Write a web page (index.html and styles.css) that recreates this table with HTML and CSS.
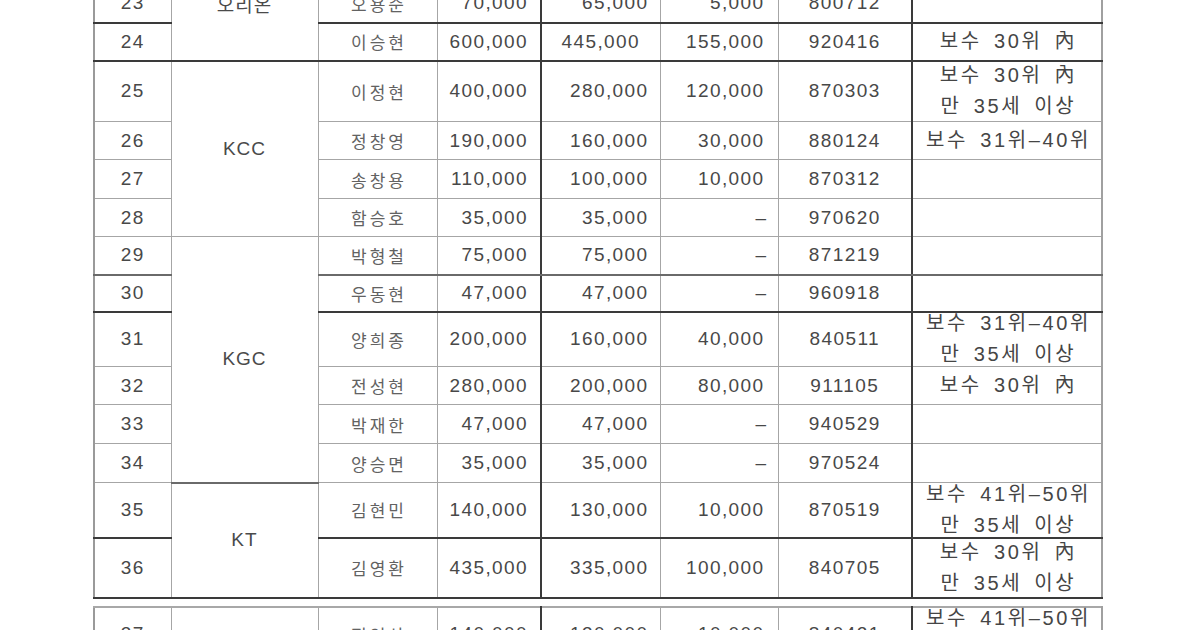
FILE: index.html
```html
<!DOCTYPE html>
<html lang="ko">
<head>
<meta charset="utf-8">
<title>보수 표</title>
<link rel="stylesheet" href="styles.css">
</head>
<body>
<div class="page">
  <table class="sheet first">
    <colgroup>
      <col class="w1"><col class="w2"><col class="w3"><col class="w4"><col class="w5"><col class="w6"><col class="w7"><col class="w8">
    </colgroup>
    <tbody>
      <tr class="h38">
        <td class="no"></td>
        <td class="team dkb" rowspan="3">오리온</td>
        <td class="nm"></td>
        <td class="r4"></td>
        <td class="c5 r5"></td>
        <td class="r6"></td>
        <td class="bd"></td>
        <td class="c8"></td>
      </tr>
      <tr class="h38 dk">
        <td class="no">23</td>
        <td class="nm">오용준</td>
        <td class="r4">70,000</td>
        <td class="c5 r5">65,000</td>
        <td class="r6">5,000</td>
        <td class="bd">800712</td>
        <td class="c8"></td>
      </tr>
      <tr class="h38 dk">
        <td class="no">24</td>
        <td class="nm">이승현</td>
        <td class="r4">600,000</td>
        <td class="c5 mid">445,000</td>
        <td class="r6">155,000</td>
        <td class="bd">920416</td>
        <td class="c8 nt"><div class="note">보수 30위 內</div></td>
      </tr>
      <tr class="h61">
        <td class="no">25</td>
        <td class="team" rowspan="4">KCC</td>
        <td class="nm">이정현</td>
        <td class="r4">400,000</td>
        <td class="c5 r5">280,000</td>
        <td class="r6">120,000</td>
        <td class="bd">870303</td>
        <td class="c8 nt"><div class="note two">보수 30위 內<br>만 35세 이상</div></td>
      </tr>
      <tr class="h38">
        <td class="no">26</td>
        <td class="nm">정창영</td>
        <td class="r4">190,000</td>
        <td class="c5 r5">160,000</td>
        <td class="r6">30,000</td>
        <td class="bd">880124</td>
        <td class="c8 nt"><div class="note">보수 31위–40위</div></td>
      </tr>
      <tr class="h39">
        <td class="no">27</td>
        <td class="nm">송창용</td>
        <td class="r4">110,000</td>
        <td class="c5 r5">100,000</td>
        <td class="r6">10,000</td>
        <td class="bd">870312</td>
        <td class="c8"></td>
      </tr>
      <tr class="h38">
        <td class="no">28</td>
        <td class="nm">함승호</td>
        <td class="r4">35,000</td>
        <td class="c5 r5">35,000</td>
        <td class="r6 dash">–</td>
        <td class="bd">970620</td>
        <td class="c8"></td>
      </tr>
      <tr class="h38 md">
        <td class="no">29</td>
        <td class="team" rowspan="6">KGC</td>
        <td class="nm">박형철</td>
        <td class="r4">75,000</td>
        <td class="c5 r5">75,000</td>
        <td class="r6 dash">–</td>
        <td class="bd">871219</td>
        <td class="c8"></td>
      </tr>
      <tr class="h37 dk">
        <td class="no">30</td>
        <td class="nm">우동현</td>
        <td class="r4">47,000</td>
        <td class="c5 r5">47,000</td>
        <td class="r6 dash">–</td>
        <td class="bd">960918</td>
        <td class="c8"></td>
      </tr>
      <tr class="h55">
        <td class="no">31</td>
        <td class="nm">양희종</td>
        <td class="r4">200,000</td>
        <td class="c5 r5">160,000</td>
        <td class="r6">40,000</td>
        <td class="bd">840511</td>
        <td class="c8 nt"><div class="note two">보수 31위–40위<br>만 35세 이상</div></td>
      </tr>
      <tr class="h38">
        <td class="no">32</td>
        <td class="nm">전성현</td>
        <td class="r4">280,000</td>
        <td class="c5 r5">200,000</td>
        <td class="r6">80,000</td>
        <td class="bd">911105</td>
        <td class="c8 nt"><div class="note">보수 30위 內</div></td>
      </tr>
      <tr class="h39">
        <td class="no">33</td>
        <td class="nm">박재한</td>
        <td class="r4">47,000</td>
        <td class="c5 r5">47,000</td>
        <td class="r6 dash">–</td>
        <td class="bd">940529</td>
        <td class="c8"></td>
      </tr>
      <tr class="h39">
        <td class="no">34</td>
        <td class="nm">양승면</td>
        <td class="r4">35,000</td>
        <td class="c5 r5">35,000</td>
        <td class="r6 dash">–</td>
        <td class="bd">970524</td>
        <td class="c8"></td>
      </tr>
      <tr class="h55 dk">
        <td class="no">35</td>
        <td class="team dkb" rowspan="2">KT</td>
        <td class="nm">김현민</td>
        <td class="r4">140,000</td>
        <td class="c5 r5">130,000</td>
        <td class="r6">10,000</td>
        <td class="bd">870519</td>
        <td class="c8 nt"><div class="note two">보수 41위–50위<br>만 35세 이상</div></td>
      </tr>
      <tr class="h60 dk">
        <td class="no">36</td>
        <td class="nm">김영환</td>
        <td class="r4">435,000</td>
        <td class="c5 r5">335,000</td>
        <td class="r6">100,000</td>
        <td class="bd">840705</td>
        <td class="c8 nt"><div class="note two">보수 30위 內<br>만 35세 이상</div></td>
      </tr>
    </tbody>
  </table>

  <table class="sheet second">
    <colgroup>
      <col class="w1"><col class="w2"><col class="w3"><col class="w4"><col class="w5"><col class="w6"><col class="w7"><col class="w8">
    </colgroup>
    <tbody>
      <tr class="h55">
        <td class="no">37</td>
        <td class="team"></td>
        <td class="nm">정영삼</td>
        <td class="r4">140,000</td>
        <td class="c5 r5">130,000</td>
        <td class="r6">10,000</td>
        <td class="bd">840421</td>
        <td class="c8 nt"><div class="note two">보수 41위–50위<br>만 35세 이상</div></td>
      </tr>
    </tbody>
  </table>
</div>
</body>
</html>
```

FILE: styles.css
```css
html, body {
  margin: 0;
  padding: 0;
  background: #ffffff;
  overflow: hidden;
}

.page {
  width: 1200px;
  height: 630px;
  overflow: hidden;
  box-sizing: border-box;
  padding-left: 93px;
}

.sheet {
  border-collapse: collapse;
  table-layout: fixed;
  width: 1008px;
  font-family: "Liberation Sans", "Noto Sans CJK KR", sans-serif;
  font-size: 19px;
  letter-spacing: 1.4px;
  color: #484848;
  border-left: 2px solid #9a9a9a;
  border-right: 2px solid #a0a0a0;
}

.first { margin-top: -54px; }
.second { margin-top: 7px; border-top: 2px solid #a8a8a8; }

.w1 { width: 77px; }
.w2 { width: 147px; }
.w3 { width: 119px; }
.w4 { width: 104px; }
.w5 { width: 119px; }
.w6 { width: 118px; }
.w7 { width: 134px; }
.w8 { width: 190px; }

.sheet td {
  border: 1px solid #a6a6a6;
  padding: 0;
  text-align: center;
  vertical-align: middle;
  white-space: nowrap;
}

.h37 { height: 37px; }
.h38 { height: 38px; }
.h39 { height: 39px; }
.h55 { height: 55px; }
.h60 { height: 60px; }
.h61 { height: 61px; }

.sheet tr.dk > td { border-bottom: 2px solid #3a3a3a; }
.sheet tr.md > td { border-bottom: 2px solid #6a6a6a; }
.sheet td.team { border-bottom: 1px solid #a6a6a6; }
.sheet td.team.dkb { border-bottom: 2px solid #3a3a3a; }

.sheet td.c5 { border-left: 2px solid #3a3a3a; }
.sheet td.c8 { border-left: 2px solid #3a3a3a; }

.no { padding-left: 1px; }

.team {
  color: #4a4a4a;
  letter-spacing: 1px;
}

.nm {
  font-family: "Noto Sans CJK KR", sans-serif;
  font-size: 17px;
  letter-spacing: 3px;
  color: #626262;
}
.sheet td.nm { padding-left: 3px; }

.sheet td.r4 { text-align: right; padding-right: 12px; }
.sheet td.r5 { text-align: right; padding-right: 11px; }
.sheet td.r6 { text-align: right; padding-right: 13px; }
.sheet td.dash { padding-right: 10px; }
.sheet td.mid { text-align: center; }

.sheet td.nt { padding-left: 3px; }

.note {
  font-size: 20px;
  letter-spacing: 2.6px;
  word-spacing: 4px;
  line-height: 31px;
  color: #454545;
}

.note.two { margin: -6px 0; }
```
